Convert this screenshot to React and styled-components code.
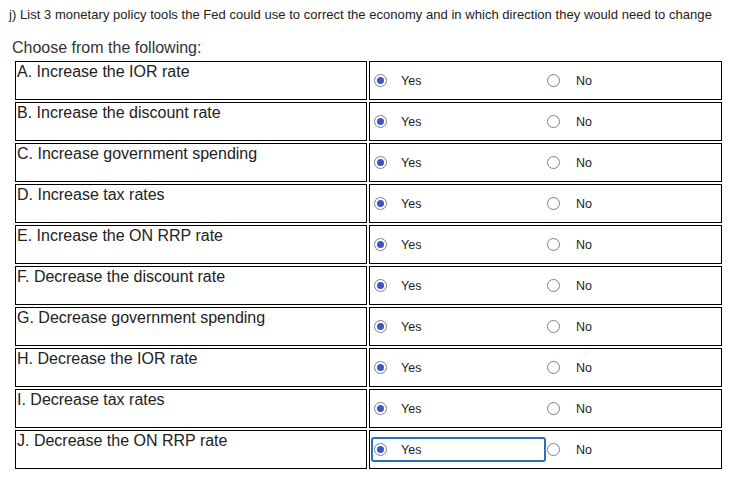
import React from "react";
import styled, { createGlobalStyle } from "styled-components";

const options = [
  "A. Increase the IOR rate",
  "B. Increase the discount rate",
  "C. Increase government spending",
  "D. Increase tax rates",
  "E. Increase the ON RRP rate",
  "F. Decrease the discount rate",
  "G. Decrease government spending",
  "H. Decrease the IOR rate",
  "I. Decrease tax rates",
  "J. Decrease the ON RRP rate",
];

const App = () => {
  return (
    <Page>
      <GlobalStyle />
      <Question>
        j) List 3 monetary policy tools the Fed could use to correct the economy
        and in which direction they would need to change
      </Question>
      <Prompt>Choose from the following:</Prompt>
      <Rows>
        {options.map((text, i) => (
          <Row key={text}>
            <TextCell>{text}</TextCell>
            <ChoiceCell>
              <Choice focused={i === options.length - 1}>
                <Radio checked />
                <ChoiceLabel>Yes</ChoiceLabel>
              </Choice>
              <Choice second>
                <Radio />
                <ChoiceLabel second>No</ChoiceLabel>
              </Choice>
            </ChoiceCell>
          </Row>
        ))}
      </Rows>
    </Page>
  );
};

export default App;
//
const GlobalStyle = createGlobalStyle`
  body {
    margin: 0;
    background: #ffffff;
    font-family: "Liberation Sans", Arial, sans-serif;
    color: #222;
  }
`;

const Page = styled.div`
  width: 752px;
  height: 484px;
  padding: 7px 0 0 9px;
  box-sizing: border-box;
`;

const Question = styled.div`
  font-size: 13px;
  line-height: 16px;
  letter-spacing: 0.04px;
  color: #222;
  white-space: nowrap;
`;

const Prompt = styled.div`
  margin: 16px 0 0 3px;
  font-size: 16px;
  line-height: 18px;
  color: #333;
`;

const Rows = styled.div`
  margin: 4px 0 0 6px;
  display: flex;
  flex-direction: column;
  gap: 2px;
`;

const Row = styled.div`
  display: grid;
  grid-template-columns: 352px 353px;
  column-gap: 2px;
  height: 39px;
`;

const TextCell = styled.div`
  border: 1px solid #000;
  padding: 1px 1px;
  font-size: 16px;
  line-height: 18px;
  color: #222;
  box-sizing: border-box;
`;

const ChoiceCell = styled.div`
  border: 1px solid #000;
  box-sizing: border-box;
  display: grid;
  grid-template-columns: 175px 1fr;
  align-items: center;
  padding-left: 1px;
`;

const Choice = styled.div`
  display: flex;
  align-items: center;
  height: 25px;
  box-sizing: border-box;
  padding-left: ${(p) => (p.second ? "0" : "1px")};
  border: 2px solid ${(p) => (p.focused ? "#2f6fb3" : "transparent")};
  border-radius: 3px;
  & > span:first-child {
    margin-left: ${(p) => (p.second ? "-1px" : "0")};
  }
`;

const Radio = styled.span`
  width: 13px;
  height: 13px;
  border-radius: 50%;
  border: 1px solid #7b7ba6;
  box-sizing: border-box;
  display: flex;
  align-items: center;
  justify-content: center;
  flex-shrink: 0;
  &::after {
    content: "";
    width: 7px;
    height: 7px;
    border-radius: 50%;
    background: ${(p) => (p.checked ? "#3d56c0" : "transparent")};
  }
`;

const ChoiceLabel = styled.span`
  margin-left: ${(p) => (p.second ? "16px" : "14px")};
  font-size: 12.5px;
  color: #222;
`;
